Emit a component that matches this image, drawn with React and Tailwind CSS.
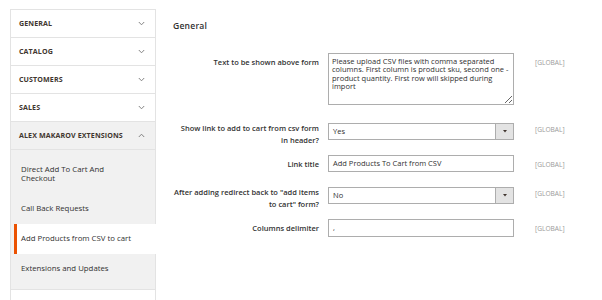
import React from "react";

const font = { fontFamily: '"Open Sans", "Liberation Sans", sans-serif' };

const Chevron = ({ up }) => (
  <svg width="7" height="5" viewBox="0 0 7 5" className="text-[#777]">
    <polyline
      points={up ? "0.8,4 3.5,1.2 6.2,4" : "0.8,1 3.5,3.8 6.2,1"}
      fill="none"
      stroke="currentColor"
      strokeWidth="0.9"
    />
  </svg>
);

const NavTitle = ({ title, open }) => (
  <div
    className={`h-[28px] flex items-center justify-between pl-[8px] pr-[10px] border-b border-[#e3e3e3] ${
      open ? "bg-[#f1f1f1]" : "bg-white"
    }`}
  >
    <span className="text-[7.1px] font-bold uppercase text-[#41362f] tracking-[0.1px]">
      {title}
    </span>
    <Chevron up={open} />
  </div>
);

const Scope = ({ pt }) => (
  <div className={`pl-[21px] text-[6.6px] text-[#9a9a9a] leading-[11px] ${pt}`}>
    [GLOBAL]
  </div>
);

const Row = ({ label, twoLine, mt, children }) => (
  <div className={`flex items-start ${mt}`}>
    <div
      className={`w-[149px] text-right text-[7.5px] font-semibold text-[#333] leading-[11.5px] ${
        twoLine ? "pt-0" : "pt-[3.5px]"
      }`}
    >
      {label}
    </div>
    <div className="ml-[9px] w-[186px]">{children}</div>
    <Scope pt={twoLine ? "pt-[0.5px]" : "pt-[3.5px]"} />
  </div>
);

const Select = ({ value }) => (
  <div className="h-[17px] flex border border-[#adadad] bg-white">
    <div className="flex-1 flex items-center pl-[4px] text-[7.5px] text-[#303030]">
      {value}
    </div>
    <div className="w-[18px] bg-[#e3e3e3] border-l border-[#adadad] flex items-center justify-center">
      <svg width="4" height="3" viewBox="0 0 4 3">
        <polygon points="0,0 4,0 2,2.6" fill="#41362f" />
      </svg>
    </div>
  </div>
);

const Input = ({ value, h = "h-[17px]" }) => (
  <div
    className={`${h} flex items-center border border-[#adadad] bg-white pl-[4px] text-[7.5px] text-[#303030]`}
  >
    {value}
  </div>
);

export default function App() {
  const text =
    "Please upload CSV files with comma separated\ncolumns. First column is product sku, second one -\nproduct quantity. First row will skipped during\nimport";

  return (
    <div className="w-[602px] h-[300px] bg-white flex overflow-hidden" style={font}>
      <div className="ml-[10px] mt-[9px] w-[146px] border border-[#e3e3e3] self-start flex flex-col">
        <NavTitle title="General" />
        <NavTitle title="Catalog" />
        <NavTitle title="Customers" />
        <NavTitle title="Sales" />
        <NavTitle title="Alex Makarov Extensions" open />
        <div className="bg-[#f1f1f1] pt-[4px] pb-[5px] text-[7.8px] text-[#303030]">
          <div className="py-[11px] pl-[10px] leading-[9px]">
            Direct Add To Cart And
            <br />
            Checkout
          </div>
          <div className="h-[30px] flex items-center pl-[10px]">Call Back Requests</div>
          <div className="h-[30px] flex items-center ml-[3px] mr-[-1px] pl-[4px] bg-white border-l-[3px] border-[#eb5202]">
            Add Products from CSV to cart
          </div>
          <div className="h-[30px] flex items-center pl-[10px]">Extensions and Updates</div>
        </div>
        <div className="h-[20px] bg-white border-t border-[#e3e3e3]" />
      </div>

      <div className="flex-1 pl-[17px] pt-[21px]">
        <div className="text-[8.6px] font-semibold text-[#303030] leading-[11px] tracking-[0.2px]">
          General
        </div>
        <div className="ml-[-3px] mt-[21px]">
          <Row label="Text to be shown above form" mt="mt-0">
            <textarea
              readOnly
              value={text}
              className="block w-[186px] h-[52px] border border-[#adadad] px-[3px] pt-[3px] text-[7.5px] leading-[8.3px] text-[#303030] whitespace-pre overflow-hidden outline-none"
              style={font}
            />
          </Row>
          <Row
            label={
              <>
                Show link to add to cart from csv form
                <br />
                in header?
              </>
            }
            twoLine
            mt="mt-[18px]"
          >
            <Select value="Yes" />
          </Row>
          <Row label="Link title" mt="mt-[9px]">
            <Input value="Add Products To Cart from CSV" />
          </Row>
          <Row
            label={
              <>
                After adding redirect back to "add items
                <br />
                to cart" form?
              </>
            }
            twoLine
            mt="mt-[15px]"
          >
            <Select value="No" />
          </Row>
          <Row label="Columns delimiter" mt="mt-[9px]">
            <Input value="," h="h-[18px]" />
          </Row>
        </div>
      </div>
    </div>
  );
}
